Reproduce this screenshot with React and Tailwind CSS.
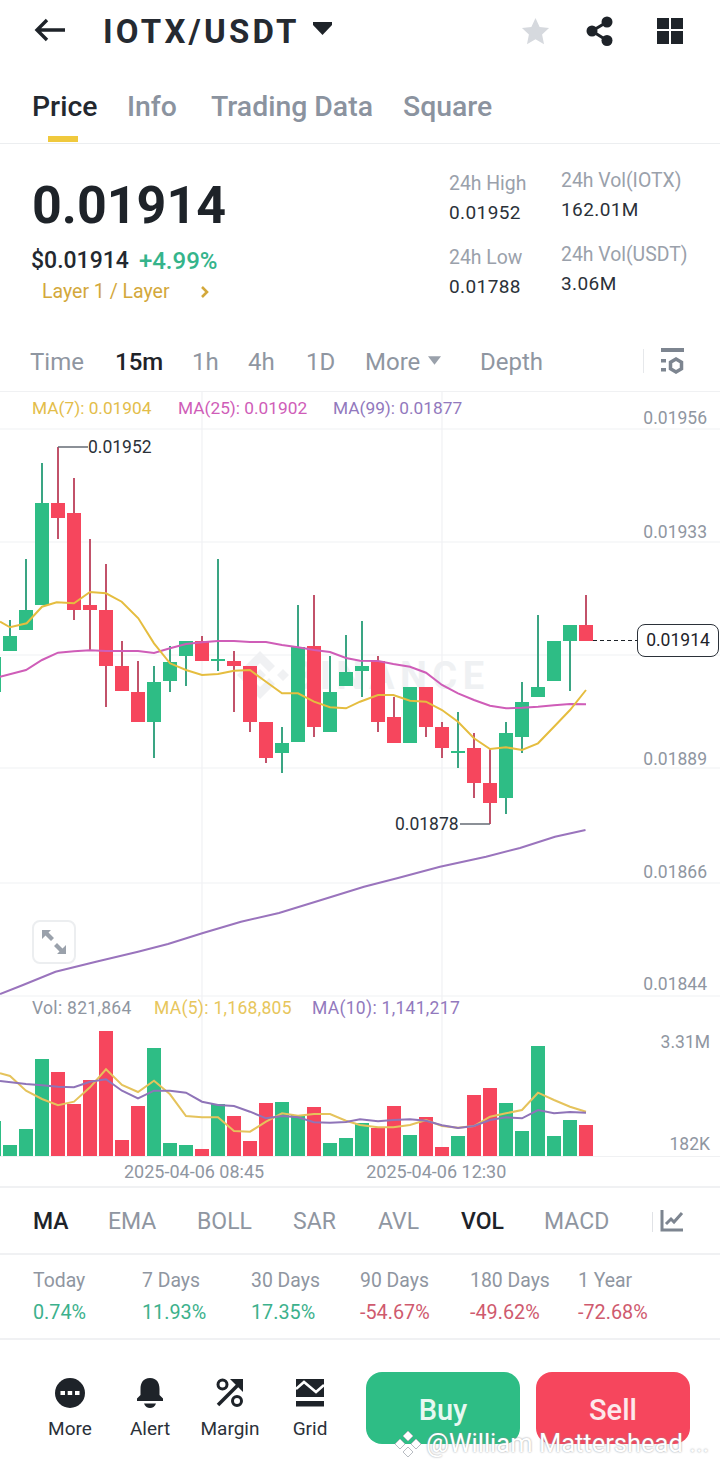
const F = { fontFamily: 'Roboto, "Noto Sans", sans-serif' };
const G = '#2ebd85', R = '#f6465d';
const candles = [
[-6,'g',657,657,692,692],[10,'g',620,636,651,651],[26,'g',559,610,630,630],[42,'g',463,503,605,605],
[58,'r',447,503,518,539],[74,'r',478,513,610,620],[90,'r',539,605,610,651],[106,'r',564,610,666,707],
[122,'r',641,666,691,691],[138,'r',661,692,722,722],[154,'g',666,682,722,758],[170,'g',646,662,681,692],
[186,'g',641,641,656,686],[202,'r',636,641,661,661],[218,'g',559,659,661,671],[234,'r',651,661,666,712],
[250,'r',666,666,722,732],[266,'r',722,722,758,763],[282,'g',727,743,753,773],[298,'g',605,647,742,742],
[314,'r',595,646,727,737],[330,'g',656,692,732,732],[346,'g',635,672,686,686],[362,'g',621,666,671,697],
[378,'r',656,661,722,732],[394,'r',697,717,743,743],[410,'g',687,687,743,743],[426,'r',687,687,727,737],
[442,'r',722,727,748,758],[458,'g',712,751,753,768],[474,'r',733,748,783,798],[490,'r',748,783,803,824],
[506,'g',722,733,798,814],[522,'g',682,702,737,753],[538,'g',615,687,697,697],[554,'g',641,641,681,681],
[570,'g',625,625,641,691],[586,'r',595,625,641,641]];
const vols = [[-6,'g',1121],[10,'g',1145],[26,'g',1129],[42,'g',1059],[58,'r',1072],[74,'r',1104],[90,'r',1080],[106,'r',1031],[122,'r',1140],[138,'r',1106],[154,'g',1048],[170,'g',1143],[186,'g',1145],[202,'r',1149],[218,'g',1104],[234,'r',1116],[250,'r',1141],[266,'r',1103],[282,'g',1102],[298,'g',1115],[314,'r',1107],[330,'g',1143],[346,'g',1138],[362,'g',1123],[378,'r',1128],[394,'r',1106],[410,'g',1135],[426,'r',1117],[442,'r',1147],[458,'g',1136],[474,'r',1095],[490,'r',1088],[506,'g',1103],[522,'g',1131],[538,'g',1046],[554,'g',1136],[570,'g',1120],[586,'r',1125]];
const conv = (a, x0, y0) => a.map(([x, y]) => `${(x / 3 + x0).toFixed(1)},${(y / 3 + y0).toFixed(1)}`).join(' ');
const ma7 = conv([[0,575],[30,592],[80,580],[126,530],[170,517],[222,520],[270,486],[318,490],[365,515],[415,565],[462,640],[510,700],[558,720],[606,735],[654,732],[702,722],[750,720],[798,755],[846,790],[894,790],[942,815],[990,832],[1038,835],[1080,815]],0,430)+' '+conv([[54,795],[100,795],[150,812],[198,815],[246,840],[294,875],[342,925],[390,957],[438,952],[486,960],[534,940],[582,890],[630,840],[678,780]],360,430);
const ma25 = conv([[0,740],[78,720],[126,690],[174,668],[222,664],[270,661],[318,663],[366,663],[414,663],[462,669],[510,655],[558,642],[606,637],[654,633],[702,633],[750,636],[798,636],[846,645],[894,652],[942,660],[990,666],[1038,684],[1080,692]],0,430)+' '+conv([[54,693],[100,702],[150,710],[198,728],[246,765],[294,790],[342,810],[390,827],[438,835],[486,833],[534,830],[582,826],[630,822],[678,823]],360,430);
const ma99 = '0,994 23,985 55.5,971.7 96,961.7 138,951.7 168,944 203,933 241,921.7 279,913 318,901 364,886.7 398,878 440,866.7 486,856.7 520,848 555,836.7 585.5,830';
const v5 = conv([[0,220],[30,228],[78,272],[126,297],[174,316],[222,305],[270,262],[318,208],[366,255],[414,276],[462,242],[510,283],[558,348],[606,352],[654,352],[702,393],[750,395],[798,365],[846,340],[894,347],[942,342],[990,342],[1038,362],[1080,375]],0,1000)+' '+conv([[54,382],[100,382],[150,375],[198,360],[246,378],[294,383],[342,378],[390,350],[438,340],[486,330],[534,278],[582,300],[630,320],[678,335]],360,1000);
const v10 = conv([[0,243],[78,252],[126,256],[174,260],[222,262],[270,245],[318,238],[366,272],[414,295],[462,272],[510,272],[558,278],[606,305],[654,315],[702,318],[750,335],[798,355],[846,348],[894,352],[942,367],[990,368],[1038,366],[1080,358]],0,1000)+' '+conv([[54,364],[100,360],[150,358],[198,362],[246,376],[294,384],[342,378],[390,360],[438,352],[486,355],[534,330],[582,340],[630,336],[678,338]],360,1000);

function ChartArt() {
  const grid = '#f0f1f3';
  return (
    <svg className="absolute inset-0" width="720" height="765" viewBox="0 392 720 765">
      {[429,542,655,768,883,996].map(y => <line key={y} x1="0" x2="720" y1={y} y2={y} stroke={grid} strokeWidth="1.2" />)}
      <line x1="202" x2="202" y1="392" y2="1157" stroke={grid} strokeWidth="1.2" />
      <line x1="442" x2="442" y1="392" y2="1157" stroke={grid} strokeWidth="1.2" />
      <g fill="#f0f1f3">
        <path d="M260 651l15 15-6 6-9-9-9 9-6-6zM237 675l6-6 6 6-6 6zM283 669l6 6-6 6-6-6zM260 669l6 6-6 6-6-6zM260 699l-15-15 6-6 9 9 9-9 6 6z" />
      </g>
      {candles.map(([x, c, wt, bt, bb, wb]) => {
        const col = c === 'g' ? G : R;
        const wick = c === 'g' ? '#3aa583' : '#c2526a';
        return (
          <g key={x}>
            <rect x={x - 1} y={wt} width="2" height={wb - wt} fill={wick} />
            <rect x={x - 7} y={bt} width="14" height={Math.max(bb - bt, 2)} fill={col} />
          </g>
        );
      })}
      <polyline points={ma99} fill="none" stroke="#9a74bd" strokeWidth="2" />
      <polyline points={ma25} fill="none" stroke="#cf5db8" strokeWidth="2" />
      <polyline points={ma7} fill="none" stroke="#e5bd3f" strokeWidth="2" />
      <path d="M58 447H88M460 824H490" stroke="#666c75" strokeWidth="1.3" fill="none" />
      <path d="M593 640.5H637" stroke="#1e2329" strokeWidth="1" strokeDasharray="4 3" fill="none" />
      {vols.map(([x, c, t]) => <rect key={x} x={x - 7} y={t} width="14" height={1156 - t} fill={c === 'g' ? G : R} />)}
      <polyline points={v5} fill="none" stroke="#e5c35c" strokeWidth="2" />
      <polyline points={v10} fill="none" stroke="#8f74b8" strokeWidth="2" />
      <line x1="0" x2="720" y1="1156.5" y2="1156.5" stroke={grid} strokeWidth="1.2" />
    </svg>
  );
}

function Axis({ cls, children }) {
  return <div className={`absolute text-[17.5px] leading-5 text-[#8f96a1] ${cls}`}>{children}</div>;
}

function Stat({ label, value }) {
  return (
    <div className="flex flex-col">
      <span className="text-[19.4px] leading-[28px] whitespace-nowrap text-[#9aa1ab]">{label}</span>
      <span className="text-[19px] leading-[30px] tracking-[0.4px] text-[#2b3139]">{value}</span>
    </div>
  );
}

function Pct({ w, label, value, red }) {
  return (
    <div className={`flex flex-col ${w}`}>
      <span className="text-[19.4px] leading-[28px] text-[#8f96a1]">{label}</span>
      <span className={`text-[19.8px] leading-[36px] ${red ? 'text-[#cf5a6e]' : 'text-[#3cb18c]'}`}>{value}</span>
    </div>
  );
}

function ToolItem({ w, label, children }) {
  return (
    <div className={`flex flex-col items-center ${w}`}>
      <div className="h-[34px] w-[34px] flex items-center justify-center">{children}</div>
      <span className="text-[19px] leading-[24px] mt-[7px] text-[#2b3139]">{label}</span>
    </div>
  );
}

export default function App() {
  return (
    <div style={F} className="w-[720px] h-[1468px] bg-white overflow-hidden relative text-[#1e2329]">
      {/* header */}
      <div className="h-[62px] flex items-center pl-[34px]">
        <svg width="32" height="26" viewBox="0 0 32 26" className="mt-[-2px]">
          <path d="M31 13H3M13 3 3 13l10 10" fill="none" stroke="#1e2329" strokeWidth="3.4" />
        </svg>
        <span className="ml-[37px] text-[33px] leading-none font-bold tracking-[3.2px] text-[#252a31]">IOTX/USDT</span>
        <svg width="19" height="13" viewBox="0 0 19 13" className="ml-[13px] mt-[-6px]">
          <path d="M0 0h19v3l-9.500 10L0 3z" fill="#1e2329" />
        </svg>
        <div className="ml-auto flex items-center pr-[36px]">
          <svg width="31" height="31" viewBox="0 0 24 24">
            <path d="M12 1.5l3.2 7 7.3.8-5.4 5 1.5 7.5L12 18l-6.6 3.8 1.5-7.5-5.4-5 7.3-.8z" fill="#d6d9de" />
          </svg>
          <svg width="30" height="30" viewBox="0 0 30 30" className="ml-[34px]">
            <g fill="#1e2329">
              <circle cx="22" cy="6" r="5.5" /><circle cx="7" cy="15" r="5.5" /><circle cx="22" cy="24.5" r="5.5" />
              <path d="M7 15 22 6M7 15l15 9.5" stroke="#1e2329" strokeWidth="3" />
            </g>
          </svg>
          <svg width="28" height="28" viewBox="0 0 28 28" className="ml-[41px]">
            <path d="M1 1h12v11H1zM15 1h12v11H15zM1 14h12v13H1zM15 14h12v13H15z" fill="#1e2329" />
          </svg>
        </div>
      </div>

      {/* tabs */}
      <div className="h-[82px] flex items-start pl-[32px] pt-[28px] border-b border-[#eceef0] relative text-[28.4px] leading-[34px]">
        <div className="relative w-[95px] font-medium text-[#23282f]">Price
          <div className="absolute left-[16px] top-[46px] w-[30px] h-[6px] bg-[#f0c93d]" />
        </div>
        <div className="w-[84px] font-medium text-[#8b939f]">Info</div>
        <div className="w-[192px] font-medium text-[#8b939f]">Trading Data</div>
        <div className="font-medium text-[#8b939f]">Square</div>
      </div>

      {/* price */}
      <div className="h-[191px] flex">
        <div className="w-[449px] pl-[32px] pt-[30px] flex flex-col">
          <span className="text-[52px] leading-[64px] font-bold text-[#1e2329]">0.01914</span>
          <div className="flex items-center mt-[9px] text-[23px] leading-[28px] font-medium ml-[-1px]">
            <span className="text-[#23282f]">$0.01914</span>
            <span className="ml-[10px] text-[24px] text-[#35b48b]">+4.99%</span>
          </div>
          <div className="flex items-center mt-[4px] ml-[10px] text-[#d3a83b] text-[19.5px] leading-[26px]">
            <span>Layer 1 / Layer</span>
            <svg width="10" height="14" viewBox="0 0 10 14" className="ml-[30px]">
              <path d="M2 2l5 5-5 5" fill="none" stroke="#d3a83b" strokeWidth="2.6" />
            </svg>
          </div>
        </div>
        <div className="w-[112px] pt-[26px] flex flex-col gap-[16px]">
          <Stat label="24h High" value="0.01952" />
          <Stat label="24h Low" value="0.01788" />
        </div>
        <div className="flex-1 pt-[23px] flex flex-col gap-[16px]">
          <Stat label="24h Vol(IOTX)" value="162.01M" />
          <Stat label="24h Vol(USDT)" value="3.06M" />
        </div>
      </div>

      {/* intervals */}
      <div className="h-[57px] flex items-center pl-[30px] pb-[2px] text-[24px] leading-[30px] text-[#8f96a1] border-b border-[#f0f1f3] relative">
        <div className="w-[85px]">Time</div>
        <div className="w-[77px] font-medium text-[#1e2329]">15m</div>
        <div className="w-[56px]">1h</div>
        <div className="w-[58px]">4h</div>
        <div className="w-[59px]">1D</div>
        <div className="w-[63px]">More</div>
        <svg width="13" height="9" viewBox="0 0 14 9" className="mt-[-4px]"><path d="M0 0h14L7 9z" fill="#9aa1ab" /></svg>
        <div className="ml-[39px]">Depth</div>
        <div className="absolute left-[643px] top-[14px] w-px h-[24px] bg-[#e6e8eb]" />
        <svg width="26" height="26" viewBox="0 0 26 26" className="absolute left-[659px] top-[13px]">
          <path d="M2 0h23v4H2zM2 11h5v3.500H2zM2 20h5v3.500H2z" fill="#7d8590" />
          <path d="M17 11l5.500 3.200v6.600L17 24l-5.500-3.200v-6.600z" fill="none" stroke="#7d8590" strokeWidth="3.500" />
        </svg>
      </div>

      {/* chart */}
      <div className="relative h-[765px]">
        <div className="absolute left-[290px] top-[265px] text-[38px] leading-none font-bold tracking-[5.5px] text-[#eff1f3]">BINANCE</div>
        <ChartArt />
        <div className="absolute left-[32px] top-[6px] text-[17.3px] leading-5 flex">
          <span className="w-[146px] text-[#e3bd4a]">MA(7): 0.01904</span>
          <span className="w-[155px] text-[#cf5db8]">MA(25): 0.01902</span>
          <span className="text-[#9279bd]">MA(99): 0.01877</span>
        </div>
        <div className="absolute left-[32px] top-[606px] text-[17.5px] leading-5 tracking-[0.3px] flex">
          <span className="w-[122px] text-[#8f96a1]">Vol: 821,864</span>
          <span className="w-[158px] text-[#e7c65c]">MA(5): 1,168,805</span>
          <span className="text-[#9279bd]">MA(10): 1,141,217</span>
        </div>
        <div className="absolute left-[88px] top-[45px] text-[17.5px] leading-5 text-[#2b3139]">0.01952</div>
        <div className="absolute left-[395px] top-[422px] text-[17.5px] leading-5 text-[#2b3139]">0.01878</div>
        <Axis cls="right-[13px] top-[16px]">0.01956</Axis>
        <Axis cls="right-[13px] top-[130px]">0.01933</Axis>
        <Axis cls="right-[13px] top-[357px]">0.01889</Axis>
        <Axis cls="right-[13px] top-[470px]">0.01866</Axis>
        <Axis cls="right-[13px] top-[582px]">0.01844</Axis>
        <Axis cls="right-[10px] top-[640px]">3.31M</Axis>
        <Axis cls="right-[10px] top-[742px]">182K</Axis>
        <div className="absolute left-[637px] top-[232px] w-[82px] h-[33px] rounded-[8px] border border-[#2b3139] bg-white flex items-center justify-center text-[17.5px] text-[#1e2329]">0.01914</div>
        <div className="absolute left-[32px] top-[528px] w-[44px] h-[44px] rounded-[8px] border-2 border-[#eceef0] bg-white flex items-center justify-center">
          <svg width="26" height="26" viewBox="0 0 26 26">
            <path d="M1 1h9L7.500 3.500 13 9l-3 3-5.500-5.500L1 10zM25 25h-9l2.500-2.500L13 17l3-3 5.500 5.500L25 16z" fill="#9aa1ab" />
          </svg>
        </div>
      </div>

      {/* dates */}
      <div className="h-[31px] flex items-center pl-[124px] gap-[102px] text-[18px] leading-5 text-[#8f96a1] border-b-2 border-[#f0f1f3]">
        <span>2025-04-06 08:45</span>
        <span>2025-04-06 12:30</span>
      </div>

      {/* indicators */}
      <div className="h-[67px] flex items-center pl-[33px] pt-[3px] text-[23px] leading-7 text-[#8f96a1] border-b-2 border-[#f0f1f3] relative">
        <div className="w-[75px] font-medium text-[#1e2329]">MA</div>
        <div className="w-[89px]">EMA</div>
        <div className="w-[96px]">BOLL</div>
        <div className="w-[85px]">SAR</div>
        <div className="w-[83px]">AVL</div>
        <div className="w-[83px] font-medium text-[#1e2329]">VOL</div>
        <div>MACD</div>
        <div className="absolute left-[652px] top-[24px] w-px h-[20px] bg-[#e0e2e6]" />
        <svg width="24" height="24" viewBox="0 0 24 24" className="absolute left-[660px] top-[21px]">
          <path d="M2 1v20h21" fill="none" stroke="#7d8590" strokeWidth="3" />
          <path d="M6 15l5-5 3 3 8-9" fill="none" stroke="#7d8590" strokeWidth="3" />
        </svg>
      </div>

      {/* returns */}
      <div className="h-[85px] flex pl-[33px] pt-[12px] border-b-2 border-[#f0f1f3]">
        <Pct w="w-[109px]" label="Today" value="0.74%" />
        <Pct w="w-[109px]" label="7 Days" value="11.93%" />
        <Pct w="w-[109px]" label="30 Days" value="17.35%" />
        <Pct w="w-[110px]" label="90 Days" value="-54.67%" red />
        <Pct w="w-[108px]" label="180 Days" value="-49.62%" red />
        <Pct w="w-[100px]" label="1 Year" value="-72.68%" red />
      </div>

      {/* bottom */}
      <div className="flex pt-[32px] pl-[30px] relative">
        <div className="flex pt-[4px]">
          <ToolItem w="w-[80px]" label="More">
            <svg width="30" height="30" viewBox="0 0 30 30">
              <circle cx="15" cy="15" r="15" fill="#1e2329" />
              <path d="M5.500 13h4.500v4H5.500zM12.700 13h4.500v4h-4.500zM20 13h4.500v4H20z" fill="#fff" />
            </svg>
          </ToolItem>
          <ToolItem w="w-[80px]" label="Alert">
            <svg width="28" height="32" viewBox="0 0 28 32">
              <path d="M14 1C7 1 4.500 6 4.500 12v6L1 21.500V24h26v-2.500L23.500 18v-6C23.500 6 21 1 14 1z" fill="#1e2329" />
              <path d="M8 26.500h12c-1 3-3.500 4.500-6 4.500s-5-1.500-6-4.500z" fill="#1e2329" />
            </svg>
          </ToolItem>
          <ToolItem w="w-[80px]" label="Margin">
            <svg width="28" height="30" viewBox="0 0 28 30">
              <path d="M2 27 24 5" stroke="#1e2329" strokeWidth="3.500" fill="none" />
              <path d="M14 1h13v13z" fill="#1e2329" />
              <circle cx="6.500" cy="6.500" r="4.500" fill="none" stroke="#1e2329" strokeWidth="3" />
              <circle cx="21" cy="23" r="4.500" fill="none" stroke="#1e2329" strokeWidth="3" />
            </svg>
          </ToolItem>
          <ToolItem w="w-[80px]" label="Grid">
            <svg width="28" height="30" viewBox="0 0 28 30">
              <path d="M0 1h28v18H0z" fill="#1e2329" />
              <path d="M0 11l8-7 12 10 8-7" fill="none" stroke="#fff" strokeWidth="2.500" />
              <path d="M0 23h28v5.500H0z" fill="#1e2329" />
            </svg>
          </ToolItem>
        </div>
        <div className="ml-[16px] w-[154px] h-[72px] rounded-[16px] bg-[#2ebd85] flex items-center justify-center pt-[5px] text-[29px] font-medium text-[#e8f8f1]">Buy</div>
        <div className="ml-[16px] w-[154px] h-[72px] rounded-[16px] bg-[#f6465d] flex items-center justify-center pt-[5px] text-[29px] font-medium text-[#fde8eb]">Sell</div>

        {/* platform watermark */}
        <div className="absolute left-[394px] top-[90px] flex items-center">
          <svg width="28" height="28" viewBox="0 0 28 28">
            <path d="M14 1l5 5-5 5-5-5zM6 9l5 5-5 5-5-5zM22 9l5 5-5 5-5-5zM14 17l5 5-5 5-5-5z" fill="#fff" stroke="#b9bdc3" strokeWidth="1" />
          </svg>
          <span className="ml-[4px] text-[25.5px] leading-none whitespace-nowrap text-white [text-shadow:0_0_2px_#8a8f96]">@William Mattershead ...</span>
        </div>
      </div>
    </div>
  );
}
